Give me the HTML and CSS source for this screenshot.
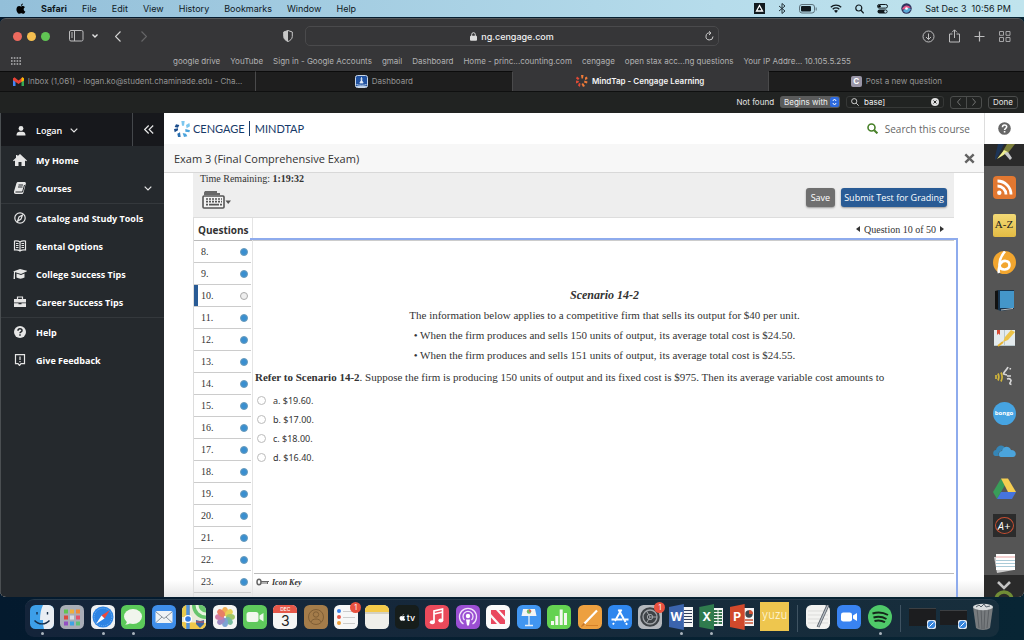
FILE: index.html
```html
<!DOCTYPE html>
<html lang="en">
<head>
  <meta charset="UTF-8">
  <title>MindTap - Cengage Learning</title>
  <link rel="stylesheet" href="styles.css">
</head>
<body>
  <!-- Menu bar -->
  <header class="menubar">
    <nav class="menus">
      <svg class="apple" viewBox="0 0 20 24"><path d="M14 1c0 3-2 5-4 5 0-3 2-5 4-5zM10 7.500c1 0 2-1 4-1 2 0 3.500 1 4.500 2.500-4 2-3 8 1 9.500-1 3-3 5-4.500 5-2 0-2.500-1-4.500-1s-3 1-4.500 1C3 23.500 0 18 0 14c0-5 3-7.500 6-7.500 1.500 0 3 1 4 1z"/></svg>
      <b>Safari</b><span>File</span><span>Edit</span><span>View</span><span>History</span><span>Bookmarks</span><span>Window</span><span>Help</span>
    </nav>
    <div class="status">
      <svg width="11" height="11" viewBox="0 0 11 11"><rect width="11" height="11" fill="#10191e"/><path d="M5.500 2.500L8.500 8h-6z" fill="none" stroke="#fff" stroke-width="1.300"/></svg>
      <svg width="8" height="11" viewBox="0 0 8 11"><path d="M1 3l6 5-3 2.500v-10L7 3 1 8" fill="none" stroke="#26343b"/></svg>
      <svg width="18" height="10" viewBox="0 0 18 10"><rect x=".5" y=".5" width="15" height="8.500" rx="2.500" fill="none" stroke="#5c727c"/><rect x="2" y="2" width="10" height="5.500" rx="1" fill="#10191e"/><path d="M17.200 3.500v3" stroke="#5c727c"/></svg>
      <svg width="12" height="9" viewBox="0 0 12 9"><path d="M.8 3.300a7.500 7.500 0 0 1 10.400 0M2.700 5.300a4.800 4.800 0 0 1 6.600 0" fill="none" stroke="#10191e" stroke-width="1.300"/><path d="M4 6.800a3 3 0 0 1 4 0L6 9z" fill="#10191e"/></svg>
      <svg width="9" height="10" viewBox="0 0 9 10"><circle cx="3.800" cy="4" r="3" fill="none" stroke="#10191e" stroke-width="1.200"/><path d="M6 6.300l2.700 3" stroke="#10191e" stroke-width="1.300"/></svg>
      <svg width="11" height="10" viewBox="0 0 11 10"><rect x=".5" y=".5" width="10" height="3.600" rx="1.800" fill="none" stroke="#10191e"/><circle cx="2.500" cy="2.300" r="1.300"/><rect x=".5" y="5.500" width="10" height="4" rx="2" fill="#10191e"/><circle cx="8.500" cy="7.500" r="1.200" fill="#bce0ec"/></svg>
      <svg width="11" height="11" viewBox="0 0 11 11"><circle cx="5.500" cy="5.500" r="5.200" fill="#31345f"/><path d="M1 6c2-4 6-5 9-1-3-1-6 3-9 1z" fill="#e0558a"/><path d="M2 8c2-3 5-4 8-2-2 4-5 5-8 2z" fill="#58a9d8"/><circle cx="5.500" cy="5.500" r="1.300" fill="#fff"/></svg>
      <span>Sat Dec 3&nbsp; 10:56 PM</span>
    </div>
  </header>

  <div class="window">
    <!-- Safari toolbar -->
    <div class="toolbar">
      <div class="tools-left">
        <span class="light red"></span><span class="light yellow"></span><span class="light green"></span>
        <svg class="side-toggle" width="15" height="12" viewBox="0 0 15 12" fill="none" stroke="#bdbdbe"><rect x=".5" y=".5" width="13.500" height="10.500" rx="1.500"/><path d="M5.500.5v10.500M2 3h2M2 5h2M2 7h2"/></svg>
        <svg class="side-menu" width="6" height="4" viewBox="0 0 6 4"><path d="M.5.5L3 3 5.500.5" fill="none" stroke="#e4e4e4" stroke-width="1.400"/></svg>
        <svg class="back" width="6" height="11" viewBox="0 0 6 11"><path d="M5.500.5l-5 5 5 5" fill="none" stroke="#d2d2d2" stroke-width="1.200"/></svg>
        <svg class="forward" width="6" height="11" viewBox="0 0 6 11"><path d="M.5.5l5 5-5 5" fill="none" stroke="#656567" stroke-width="1.200"/></svg>
        <svg class="shield" width="10" height="12" viewBox="0 0 10 12"><path d="M5 .5l4.300 1.500v4.500C9.300 9 7 10.700 5 11.500 3 10.700.7 9 .7 6.500V2z" fill="none" stroke="#c8c8c8"/><path d="M5 .5v11C3 10.700.7 9 .7 6.500V2z" fill="#c8c8c8"/></svg>
      </div>
      <div class="address">
        <svg width="7" height="9" viewBox="0 0 7 9"><rect y="3.700" width="7" height="5" rx="1" fill="#dcdcdc"/><path d="M1.700 4V2.500a1.800 1.800 0 0 1 3.600 0V4" fill="none" stroke="#dcdcdc"/></svg>
        <span>ng.cengage.com</span>
        <svg class="reload" width="9" height="10" viewBox="0 0 9 10"><path d="M5 2a3.500 3.500 0 1 0 3 3.500M4 .3L6 2.100 4 4" fill="none" stroke="#cfcfcf"/></svg>
      </div>
      <div class="tools-right">
        <svg width="13" height="13" viewBox="0 0 13 13" fill="none" stroke="#bdbdbe"><circle cx="6.500" cy="6.500" r="5.500"/><path d="M6.500 3.500v6M4 7l2.500 2.500L9 7"/></svg>
        <svg width="11" height="14" viewBox="0 0 11 14" fill="none" stroke="#bdbdbe"><path d="M3.500 5h-3v8h10V5h-3M5.500 9V1M3 3.300L5.500.8 8 3.300"/></svg>
        <svg width="11" height="11" viewBox="0 0 11 11"><path d="M5.500.5v10M.5 5.500h10" stroke="#bdbdbe" stroke-width="1.200"/></svg>
        <svg width="12" height="11" viewBox="0 0 12 11" fill="none" stroke="#a4a4a6"><path d="M.5.5h4v3.800h-4zM7 .5h4v3.800H7zM.5 6.500h4v4h-4zM7 6.500h4v4H7z"/></svg>
      </div>
    </div>

    <nav class="bookmarks">
      <svg class="grid-dots" width="10" height="8" viewBox="0 0 10 8"><path d="M0 1h10M0 4h10M0 7h10" stroke="#b4b4b5" stroke-width="1.600" stroke-dasharray="1.600 1.200"/></svg>
      <a href="#">google drive</a><a href="#">YouTube</a><a href="#">Sign in - Google Accounts</a><a href="#">gmail</a><a href="#">Dashboard</a><a href="#">Home - princ...counting.com</a><a href="#">cengage</a><a href="#">open stax acc...ng questions</a><a href="#">Your IP Addre... 10.105.5.255</a>
    </nav>

    <div class="tabs">
      <a class="tab" href="#">
        <svg width="11" height="9" viewBox="0 0 11 9"><path d="M0 1v8h2.500V4z" fill="#4285f4"/><path d="M11 1v8H8.500V4z" fill="#34a853"/><path d="M0 1.500L1.500.3l4 3.200 4-3.200L11 1.500v1.800L5.500 7 0 3.300z" fill="#e94235"/><path d="M8.500 1.100l1.200-.8L11 1.500v2L8.500 5z" fill="#fbbc04"/></svg>
        Inbox (1,061) - logan.ko@student.chaminade.edu - Cha...
      </a>
      <a class="tab" href="#">
        <svg width="13" height="13" viewBox="0 0 13 13"><rect x=".5" y=".5" width="12" height="12" rx="2" fill="#2152a0" stroke="#c8d6e8"/><path d="M6.500 2v6M5.300 4h2.400M4.800 8h3.400L6.500 5z" stroke="#e2ebf6" stroke-width=".8" fill="#e2ebf6"/><path d="M1.500 9.500c2 1 8 1 10 0M1 11.500h11" stroke="#bcd0e8" fill="none"/></svg>
        Dashboard
      </a>
      <a class="tab active" href="#">
        <svg width="12" height="12" viewBox="0 0 24 24"><g fill="#ee7a38"><path d="M10 0h5l-1 7h-3z"/><path d="M18 5l4-2 1 5-5 2z"/><path d="M17 11l6 2-1 4-6-2z"/><path d="M14 16l4 6-4 2-3-6z"/></g><g fill="#e24a36"><path d="M9 17l-1 7-4-3 2-5z"/><path d="M0 11l6 1-1 3-5 2z"/><path d="M2 3l5 4-3 3-4-3z"/></g></svg>
        MindTap - Cengage Learning
      </a>
      <a class="tab" href="#"><span class="letter">C</span>Post a new question</a>
    </div>

    <form class="findbar">
      <label for="find">Not found</label>
      <span class="match">
        <select aria-label="Match"><option>Begins with</option></select>
        <svg width="9" height="10" viewBox="0 0 9 10"><rect width="9" height="10" rx="2" fill="#2e6be0"/><path d="M2.800 4l1.700-2 1.700 2M2.800 6l1.700 2 1.700-2" fill="none" stroke="#fff"/></svg>
      </span>
      <span class="find-field">
        <svg width="8" height="8" viewBox="0 0 8 8" fill="none" stroke="#ccc"><circle cx="3.200" cy="3.200" r="2.600"/><path d="M5.200 5.200L7.700 7.700"/></svg>
        <input id="find" type="text" value="base]">
        <svg width="8" height="8" viewBox="0 0 8 8"><circle cx="4" cy="4" r="4" fill="#dedede"/><path d="M2.500 2.500l3 3m0-3l-3 3" stroke="#2a2a2a"/></svg>
      </span>
      <span class="steps">
        <button type="button" aria-label="Previous"><svg width="4" height="8" viewBox="0 0 4 8"><path d="M3.500.5L.5 4l3 3.500" fill="none" stroke="#737474"/></svg></button>
        <button type="button" aria-label="Next"><svg width="4" height="8" viewBox="0 0 4 8"><path d="M.5.5l3 3.500-3 3.500" fill="none" stroke="#737474"/></svg></button>
      </span>
      <button class="done" type="button">Done</button>
    </form>

    <div class="page">
      <!-- Cengage side menu -->
      <aside class="sidebar">
        <div class="account">
          <button class="user" type="button">
            <svg width="10" height="10" viewBox="0 0 10 10"><circle cx="5" cy="2.500" r="2.400"/><path d="M.5 9.500C.5 6 2.500 5.800 5 5.800s4.500.2 4.500 3.700z"/></svg>
            Logan
            <svg width="8" height="5" viewBox="0 0 8 5"><path d="M.7.7L4 4 7.300.7" class="line"/></svg>
          </button>
          <button class="collapse" type="button" aria-label="Collapse menu"><svg width="10" height="9" viewBox="0 0 10 9"><path d="M4.700.5l-4 4 4 4M9.200.5l-4 4 4 4" class="line"/></svg></button>
        </div>
        <nav>
          <ul>
            <li><a href="#"><svg viewBox="0 0 14 12"><path d="M7 0l7 6.500-.8.800L12 6.500V12H8.500V8h-3v4H2V6.500l-1.200.8L0 6.500 3 3.700V1h1.500v1.300z"/></svg>My Home</a></li>
            <li><a href="#"><svg viewBox="0 0 14 12"><path d="M4.500 0H12l1 1-2.500 9.500-.8 1.500H3C1 12 .8 10.500 1 9.500L3.500 1z"/><path d="M5.500 3h4.500M5 5h4.500M2.500 10h7l2-7" stroke="#25292d" fill="none"/></svg>Courses<svg class="open" viewBox="0 0 8 5"><path d="M.7.7L4 4 7.300.7" class="line"/></svg></a></li>
          </ul>
          <ul>
            <li><a href="#"><svg viewBox="0 0 14 12"><circle cx="7" cy="6" r="5.200" class="line"/><path d="M9.500 3L8 7 4.500 9.200 6 5z" class="line"/></svg>Catalog and Study Tools</a></li>
            <li><a href="#"><svg viewBox="0 0 14 12"><path d="M7 2C5.500.8 3.500.8 1.500 1v9c2-.2 4-.2 5.500 1 1.500-1.200 3.500-1.200 5.500-1V1c-2-.2-4-.2-5.500 1zv9M3 3.500h2.500M3 5.500h2.500M3 7.500h2.500M8.500 3.500H11M8.500 5.500H11M8.500 7.500H11" class="line"/></svg>Rental Options</a></li>
            <li><a href="#"><svg viewBox="0 0 14 12"><path d="M0 3.500L7 1l7.500 2L8 6zM3.500 5.500L8 7l3.500-1.500v4C9 11 6 11 3.500 9.500zM1 4h1v7H.5z"/></svg>College Success Tips</a></li>
            <li><a href="#"><svg viewBox="0 0 14 12"><path d="M4.500 3V1h5v2" class="line"/><path d="M1 3h12v3.500H1zM1 7.200h4.500v1h3v-1H13V11H1z"/></svg>Career Success Tips</a></li>
          </ul>
          <ul>
            <li><a href="#"><svg viewBox="0 0 14 12"><circle cx="7" cy="6" r="6"/><path d="M5 4.700c0-2.600 4-2.600 4-.3C9 6 7 5.800 7 7.300M7 8.300v1.500" stroke="#25292d" stroke-width="1.500" fill="none"/></svg>Help</a></li>
            <li><a href="#"><svg viewBox="0 0 14 12"><path d="M2.500.7h9v9H8L6.500 11.500 5 9.700H2.500zM7 2.500v3.500M7 7v1.300" class="line"/></svg>Give Feedback</a></li>
          </ul>
        </nav>
      </aside>

      <main class="course">
        <header class="brand">
          <svg width="16" height="16" viewBox="0 0 24 24"><g fill="#7cc7ee"><path d="M11 0h5l-1 7h-3z"/><path d="M18 6l5-3 1 5-5 3z"/></g><path d="M17 12l7 2-1 3-6-1zM13 18l5 1 2 4-5 1z" fill="#4ba3dc"/><path d="M9 17l1 7H6l-1-5z" fill="#2a6fb0"/><path d="M0 12l6-1v3l-5 3zM3 5l5 1-2 4-5-1z" fill="#1b4d8c"/></svg>
          <span class="cengage">CENGAGE</span><span class="mindtap">MINDTAP</span>
          <a class="search" href="#"><svg width="11" height="11" viewBox="0 0 11 11" fill="none" stroke="#478028"><circle cx="4.500" cy="4.500" r="3.500" stroke-width="1.600"/><path d="M7.200 7.200l3.200 3.200" stroke-width="2"/></svg>Search this course</a>
        </header>
        <div class="exam-bar">
          <h1>Exam 3 (Final Comprehensive Exam)</h1>
          <button type="button" aria-label="Close"><svg width="11" height="11" viewBox="0 0 11 11"><path d="M1.300 1.300l8.400 8.400m0-8.400L1.300 9.700" stroke="#636363" stroke-width="2.400"/></svg></button>
        </div>
        <div class="exam">
          <div class="exam-head">
            <div>
              <p class="timer">Time Remaining: <b>1:19:32</b></p>
              <button class="keyboard" type="button" aria-label="Keyboard">
                <svg width="31" height="20" viewBox="0 0 31 20"><path d="M5 1h12v2h3v2H4V2.500z" fill="#686868"/><rect x="3" y="6" width="21" height="12" rx="1" fill="#f5f5f5" stroke="#555" stroke-width="1.600"/><path d="M6 9h16M6 11.700h16" stroke="#555" stroke-width="1.700" stroke-dasharray="2 1"/><path d="M6 14.700h2M9 14.700h10M20 14.700h2" stroke="#555" stroke-width="1.700"/><path d="M25.500 10.500H31L28.200 14z" fill="#555"/></svg>
              </button>
            </div>
            <div class="actions">
              <button class="save" type="button">Save</button>
              <button class="submit" type="button">Submit Test for Grading</button>
            </div>
          </div>
          <div class="exam-body">
            <nav class="questions">
              <h2>Questions</h2>
              <ul>
                <li><a href="#">8.<i></i></a></li>
                <li><a href="#">9.<i></i></a></li>
                <li class="current"><a href="#">10.<i></i></a></li>
                <li><a href="#">11.<i></i></a></li>
                <li><a href="#">12.<i></i></a></li>
                <li><a href="#">13.<i></i></a></li>
                <li><a href="#">14.<i></i></a></li>
                <li><a href="#">15.<i></i></a></li>
                <li><a href="#">16.<i></i></a></li>
                <li><a href="#">17.<i></i></a></li>
                <li><a href="#">18.<i></i></a></li>
                <li><a href="#">19.<i></i></a></li>
                <li><a href="#">20.<i></i></a></li>
                <li><a href="#">21.<i></i></a></li>
                <li><a href="#">22.<i></i></a></li>
                <li><a href="#">23.<i></i></a></li>
              </ul>
            </nav>
            <div class="question-col">
              <div class="pager"><a class="prev" href="#" aria-label="Previous question"></a>Question 10 of 50<a class="next" href="#" aria-label="Next question"></a></div>
              <form class="question">
                <div class="scenario">
                  <h3>Scenario 14-2</h3>
                  <p>The information below applies to a competitive firm that sells its output for $40 per unit.</p>
                  <p>• When the firm produces and sells 150 units of output, its average total cost is $24.50.</p>
                  <p>• When the firm produces and sells 151 units of output, its average total cost is $24.55.</p>
                </div>
                <p class="prompt"><b>Refer to Scenario 14-2</b>. Suppose the firm is producing 150 units of output and its fixed cost is $975. Then its average variable cost amounts to</p>
                <label><input type="radio" name="answer">a. $19.60.</label>
                <label><input type="radio" name="answer">b. $17.00.</label>
                <label><input type="radio" name="answer">c. $18.00.</label>
                <label><input type="radio" name="answer">d. $16.40.</label>
              </form>
              <a class="icon-key" href="#"><svg width="14" height="8" viewBox="0 0 14 8" fill="none" stroke="#666"><ellipse cx="3" cy="4" rx="2" ry="2.800" stroke-width="1.500"/><path d="M5 3.500h8M5 5h6M11.500 4v2" /></svg>Icon Key</a>
            </div>
          </div>
        </div>
      </main>

      <!-- App dock on the right of the course -->
      <aside class="rail">
        <a class="help" href="#" aria-label="Help"><svg width="13" height="13" viewBox="0 0 13 13"><circle cx="6.500" cy="6.500" r="6.300" fill="#666"/><path d="M4.500 5.200c0-3 4.200-2.800 4.200-.4C8.700 6.300 6.600 6.300 6.600 8M6.600 9v1.500" fill="none" stroke="#fff" stroke-width="1.600"/></svg></a>
        <div class="rail-top"><svg width="22" height="17" viewBox="0 0 22 17"><path d="M5 0h6L4 14l-2 2 0-3z" fill="#1d3557"/><path d="M14 0h8l-7 9-5-2z" fill="#7d803c"/><path d="M4 15l7-9 4 2-6 4z" fill="#f0f090"/><path d="M11 9l4-1 4 6-2 2z" fill="#c7c8ca"/></svg></div>
        <div class="rail-apps">
          <svg viewBox="0 0 23 23"><rect width="23" height="23" rx="4" fill="#e27831"/><circle cx="6.300" cy="16.700" r="2.200" fill="#fff"/><path d="M4.500 10a8.500 8.500 0 0 1 8.500 8.500M4.500 5A13.500 13.500 0 0 1 18 18.500" fill="none" stroke="#fff" stroke-width="2.800"/></svg>
          <span class="az">A-Z</span>
          <svg viewBox="0 0 23 23"><circle cx="11.500" cy="11.500" r="11.500" fill="#f2a62f"/><path d="M12 .5C8 5 6 10 6.500 15c1 5 10 4.500 10-1 0-5-7-5.500-9-1M7 13c-1 5-2 6-1 9" fill="none" stroke="#fff" stroke-width="2.600"/></svg>
          <svg viewBox="0 0 23 23"><path d="M2 2l4-1v20l-4-1z" fill="#111"/><path d="M5 1h16v19l-13 2-3-1z" fill="#17344e"/><path d="M7 2h14v17H7z" fill="#4496c9"/><path d="M8 21l12-1.500" stroke="#bbb"/></svg>
          <svg viewBox="0 0 23 23"><path d="M1 4h21v16H1z" fill="#e4ebed"/><path d="M11.500 4v16M1 19.500h21" stroke="#b9c8cc"/><path d="M4 4h3v5L5.500 7.500 4 9z" fill="#d94b34"/><path d="M18 4l4 2-7 8-5 2 2-5z" fill="#edc347"/><path d="M5 20l5-4" stroke="#e8b432" stroke-width="2"/></svg>
          <svg viewBox="0 0 23 23" fill="none"><path d="M15 3c-1 3-4 4-4.500 7l3.500 1M14 12h4M14 15c3-1 5 1 3.500 3-1 1-1 2 1 2.500M16.500 4.500l1.500.5" stroke="#d6d6d6" stroke-width="1.700"/><path d="M3 11v4M5 9.500c1 2 1 5 0 7M8 8.500c1.500 3 1.500 6 0 9" stroke="#d0b53a" stroke-width="1.700"/></svg>
          <span class="bongo">bongo</span>
          <svg viewBox="0 0 23 23"><path d="M2 17c-3-1-2-6 1-6 1-5 7-6 9-2l-4 3c-3 1-3 4-2 5z" fill="#3585b6"/><path d="M8 18c-4-1-2-6 1-6 1-5 7-6 9-1 6 0 6 7 2 7z" fill="#4ba4dc"/></svg>
          <svg viewBox="0 0 23 23"><path d="M8 1.500L0 15l4 7 8-14z" fill="#399d59"/><path d="M8 1.500h7L23 15h-8z" fill="#f6ce51"/><path d="M8 15h15l-4 7H4z" fill="#4674dd"/></svg>
          <span class="grade">A+</span>
          <svg viewBox="0 0 23 23"><path d="M1 5l18-1 2 14-17 3z" fill="#ccc"/><path d="M3 2h19v16H3z" fill="#fff"/><path d="M3 5h19" stroke="#e9a3a3"/><path d="M3 8.500h19M3 11.500h19M3 14.500h19" stroke="#aacbd8"/></svg>
        </div>
        <button class="rail-more" type="button" aria-label="More"><svg width="22" height="22" viewBox="0 0 22 22"><path d="M3 25a8 8 0 0 1 16 0" fill="none" stroke="#718d36" stroke-width="3.500"/><path d="M5 7l6 6 6-6" fill="none" stroke="#c4c4c4" stroke-width="2.600"/></svg></button>
      </aside>
    </div>
  </div>

  <!-- Dock -->
  <footer class="dock">
    <div class="apps main-apps">
      <span class="app running"><svg viewBox="0 0 24 24"><rect width="24" height="24" rx="5.500" fill="#3d9fe9"/><path d="M13 0h5.500A5.500 5.500 0 0 1 24 5.500v13a5.500 5.500 0 0 1-5.500 5.500H14c-1-4-1-7-1-9h-3c0-6 1-11 3-15z" fill="#e9edf3"/><path d="M7 7v2.500M17.500 7v2.500M4.500 15.500c4 4.500 11 4.500 15 0" fill="none" stroke="#152e4b" stroke-width="1.400"/></svg></span>
      <span class="app"><svg viewBox="0 0 24 24"><rect width="24" height="24" rx="5.500" fill="#a9adb7"/><g stroke-width="4"><path d="M4 6.500h4" stroke="#61c454"/><path d="M10 6.500h4" stroke="#efaf3c"/><path d="M16 6.500h4" stroke="#f08b35"/><path d="M4 12.500h4" stroke="#dc4a3f"/><path d="M10 12.500h4" stroke="#d9dce2"/><path d="M16 12.500h4" stroke="#e5536e"/><path d="M4 18.500h4" stroke="#9350c2"/><path d="M10 18.500h4" stroke="#3fa3e4"/><path d="M16 18.500h4" stroke="#5ec178"/></g></svg></span>
      <span class="app running"><svg viewBox="0 0 24 24"><rect width="24" height="24" rx="5.500" fill="#eef0f2"/><circle cx="12" cy="12" r="10.500" fill="#2d83e4"/><circle cx="12" cy="12" r="8.800" fill="none" stroke="#9bd0fb" stroke-dasharray=".6 1.500"/><path d="M19 5l-5.500 8.500-3-3z" fill="#ee493d"/><path d="M5 19l5.500-8.500 3 3z" fill="#fff"/></svg></span>
      <span class="app running"><svg viewBox="0 0 24 24"><rect width="24" height="24" rx="5.500" fill="#5bc95a"/><ellipse cx="12" cy="11.500" rx="9" ry="7.500" fill="#f0f5ed"/><path d="M6 16c0 2-1 3-2 3.500 2 0 4-.5 5-1.500z" fill="#f0f5ed"/></svg></span>
      <span class="app"><svg viewBox="0 0 24 24"><rect width="24" height="24" rx="5.500" fill="#3f8eea"/><rect x="3.500" y="6" width="17" height="12" rx="1.500" fill="#eef2f5"/><path d="M4 7l8 6.500L20 7M4 17.500l6-5.500M20 17.500L14 12" fill="none" stroke="#89939d"/></svg></span>
      <span class="app"><svg viewBox="0 0 24 24"><rect width="24" height="24" rx="5.500" fill="#e9ead9"/><path d="M0 12V5.500A5.500 5.500 0 0 1 5 0h3v12z" fill="#e9ca4d"/><path d="M10 0h8.500A5.500 5.500 0 0 1 24 5.500V14C16 14 10 8 10 0z" fill="#67c56c"/><path d="M15 0c0 5 4 9 9 9" stroke="#e8f3df" stroke-width="3" fill="none"/><path d="M0 17l24 1v.5a5.500 5.500 0 0 1-5.500 5.500h-13A5.500 5.500 0 0 1 0 18.500z" fill="#efc84a"/><path d="M6 0v24" stroke="#4e91df" stroke-width="3.500"/><circle cx="6" cy="14" r="4" fill="#fff"/><circle cx="6" cy="14" r="2.800" fill="#337be0"/><path d="M14 15l4 1 4-1v4l-4 4-4-4z" fill="#3867a7"/><path d="M14 17h8" stroke="#e05044"/></svg></span>
      <span class="app"><svg viewBox="0 0 24 24"><rect width="24" height="24" rx="5.500" fill="#f5f5f5"/><g opacity=".85"><ellipse cx="12" cy="6.500" rx="3" ry="4.500" fill="#f2a23a"/><ellipse cx="12" cy="6.500" rx="3" ry="4.500" transform="rotate(45 12 12)" fill="#e6cc3d"/><ellipse cx="12" cy="6.500" rx="3" ry="4.500" transform="rotate(90 12 12)" fill="#93c052"/><ellipse cx="12" cy="6.500" rx="3" ry="4.500" transform="rotate(135 12 12)" fill="#60b290"/><ellipse cx="12" cy="6.500" rx="3" ry="4.500" transform="rotate(180 12 12)" fill="#6795ce"/><ellipse cx="12" cy="6.500" rx="3" ry="4.500" transform="rotate(225 12 12)" fill="#8d76bb"/><ellipse cx="12" cy="6.500" rx="3" ry="4.500" transform="rotate(270 12 12)" fill="#cb6896"/><ellipse cx="12" cy="6.500" rx="3" ry="4.500" transform="rotate(315 12 12)" fill="#e66a4e"/></g></svg></span>
      <span class="app"><svg viewBox="0 0 24 24"><rect width="24" height="24" rx="5.500" fill="#5fc95c"/><rect x="3.500" y="7" width="12" height="10" rx="2.500" fill="#f1f7ee"/><path d="M16.500 10.500L20.500 8v8.500l-4-2.500z" fill="#f1f7ee"/></svg></span>
      <span class="app calendar"><b>DEC</b>3</span>
      <span class="app"><svg viewBox="0 0 24 24"><rect width="24" height="24" rx="5.500" fill="#a47c4a"/><g fill="none" stroke="#7f5e36"><circle cx="12" cy="12" r="7.500"/><circle cx="12" cy="9.500" r="2.700"/><path d="M7 17c1-4 9-4 10 0"/></g></svg></span>
      <span class="app"><svg viewBox="0 0 24 24"><rect width="24" height="24" rx="5.500" fill="#f7f7f7"/><circle cx="5" cy="6" r="2" fill="#3b81e8"/><circle cx="5" cy="12" r="2" fill="#e95848"/><circle cx="5" cy="18" r="2" fill="#efa03c"/><path d="M9 6.500h12M9 12.500h12M9 18.500h12" stroke="#ccc"/></svg><em class="badge">1</em></span>
      <span class="app"><svg viewBox="0 0 24 24"><rect width="24" height="24" rx="5.500" fill="#efefea"/><path d="M0 7V5.500A5.500 5.500 0 0 1 5.500 0h13A5.500 5.500 0 0 1 24 5.500V7z" fill="#f4ca49"/><path d="M0 8h24" stroke="#b7b29d"/></svg></span>
      <span class="app tv"><svg viewBox="0 0 20 24"><path d="M14 1c0 3-2 5-4 5 0-3 2-5 4-5zM10 7.500c1 0 2-1 4-1 2 0 3.500 1 4.500 2.500-4 2-3 8 1 9.500-1 3-3 5-4.500 5-2 0-2.500-1-4.500-1s-3 1-4.500 1C3 23.500 0 18 0 14c0-5 3-7.500 6-7.500 1.500 0 3 1 4 1z"/></svg>tv</span>
      <span class="app"><svg viewBox="0 0 24 24"><rect width="24" height="24" rx="5.500" fill="#ea4a5b"/><path d="M9 17V6l8.500-2v11.500M9 9l8.500-2" fill="none" stroke="#fff" stroke-width="1.700"/><ellipse cx="7.300" cy="17.300" rx="2.500" ry="2" fill="#fff"/><ellipse cx="15.800" cy="15.500" rx="2.500" ry="2" fill="#fff"/></svg></span>
      <span class="app"><svg viewBox="0 0 24 24"><rect width="24" height="24" rx="5.500" fill="#9b4fd3"/><g fill="none" stroke="#f2e4fb" stroke-width="1.300"><path d="M7.500 19a8.500 8.500 0 1 1 9 0M8.500 15a5 5 0 1 1 7 0"/></g><circle cx="12" cy="11" r="2.200" fill="#fff"/><path d="M10 14.500h4l-1 6h-2z" fill="#fff"/></svg></span>
      <span class="app"><svg viewBox="0 0 24 24"><rect width="24" height="24" rx="5.500" fill="#fafafa"/><path d="M5 5h5l9 10v4h-5L5 9zM13 5h6v6.500zM5 12.500v6.500h6z" fill="#e9485f"/></svg></span>
      <span class="app"><svg viewBox="0 0 24 24"><rect width="24" height="24" rx="5.500" fill="#4196f1"/><path d="M6 4h12l1.500 7h-15z" fill="#f4f4f4"/><circle cx="12" cy="6.500" r="2.200" fill="#75b860"/><path d="M12 6.500V4.300a2.200 2.200 0 0 1 2 3z" fill="#db5d55"/><path d="M12 11v9M8 20.500h8" stroke="#e5eef8" stroke-width="1.300"/></svg></span>
      <span class="app"><svg viewBox="0 0 24 24"><rect width="24" height="24" rx="5.500" fill="#64d251"/><path d="M5.500 20v-4M9.800 20V11M14.200 20V4.500M18.500 20V8" stroke="#f4f7ef" stroke-width="3"/></svg></span>
      <span class="app"><svg viewBox="0 0 24 24"><rect width="24" height="24" rx="5.500" fill="#eda040"/><path d="M5 20L19 5.500" stroke="#fff" stroke-width="2.200"/><path d="M3.500 21.500l2-3.500 1.500 1.500zM8 20.500h12" stroke="#d58129" fill="#b9732d"/></svg></span>
      <span class="app"><svg viewBox="0 0 24 24"><rect width="24" height="24" rx="5.500" fill="#2f87ee"/><path d="M13.500 4.500L7 16M10.500 4.500L17.500 17M3.500 14.500h11M17 14.500h3.500M6 18l-1.200 1.500M18 18l1 1.800" stroke="#fff" stroke-width="1.900"/></svg></span>
      <span class="app"><svg viewBox="0 0 24 24"><rect width="24" height="24" rx="5.500" fill="#b4b8bd"/><circle cx="12" cy="12" r="9.800" fill="#3e4347"/><circle cx="12" cy="12" r="7" fill="none" stroke="#a0a4a8" stroke-width="1.300"/><circle cx="12" cy="12" r="2.700" fill="none" stroke="#a0a4a8"/><path d="M12 12h7M12 12L8.500 6M12 12l-3.500 6" stroke="#a0a4a8"/></svg><em class="badge">1</em></span>
      <span class="app office word running"><svg viewBox="0 0 24 24"><path d="M13 2h11v20H13z" fill="#f5f5f5"/><path d="M15 5.500h8M15 8.500h8M15 11.500h8M15 14.500h8M15 17.500h8" stroke="#33405b"/></svg><b>W</b></span>
      <span class="app office excel running"><svg viewBox="0 0 24 24"><path d="M13 3h11v18H13z" fill="#f5f5f5"/><path d="M15 6h8M15 9h8M15 12h8M15 15h8M15 18h8" stroke="#36764f" stroke-width="1.800" stroke-dasharray="3.500 1"/></svg><b>X</b></span>
      <span class="app office powerpoint"><svg viewBox="0 0 24 24"><path d="M13 3h11v18H13z" fill="#f5f5f5"/><circle cx="19" cy="9" r="3.700" fill="#40464b"/><path d="M19 9V5a4 4 0 0 1 4 4z" fill="#d75336"/><path d="M15 15h8M15 18h8" stroke="#c85335" stroke-width="1.300"/></svg><b>P</b></span>
      <span class="app yuzu">yuzu</span>
    </div>
    <hr>
    <div class="apps">
      <span class="app"><svg viewBox="0 0 24 24"><rect width="24" height="24" rx="5.500" fill="#f3f3f1"/><path d="M2 6h20M2 10h20M2 14h20M2 18h20" stroke="#d2d2d0" stroke-width=".7"/><path d="M12 22L22 0" stroke="#59616a" stroke-width="3"/><path d="M12.300 21.500L21.800.5" stroke="#b8bec4" stroke-width="1.300"/></svg></span>
      <span class="app"><svg viewBox="0 0 24 24"><rect width="24" height="24" rx="5.500" fill="#3983f1"/><rect x="4" y="7.500" width="11" height="9" rx="2.300" fill="#fff"/><path d="M16 10.500L20 8v8l-4-2.500z" fill="#fff"/></svg></span>
      <span class="app running"><svg viewBox="0 0 24 24"><circle cx="12" cy="12" r="12" fill="#4fc969"/><path d="M4.500 8.500c5-1.500 11-1 15.500 1.500M5.500 12.500c4.500-1.200 9-.8 13 1.500M6.500 16c4-1 7-.7 10.500 1.200" fill="none" stroke="#15261b" stroke-width="2"/></svg></span>
    </div>
    <hr>
    <div class="apps">
      <span class="app mini"><svg viewBox="0 0 27 24"><path d="M0 3h27v18H0z" fill="#1c1d1f"/><path d="M0 3.500h27" stroke="#3c3f42"/><rect x="18" y="15" width="9" height="9" rx="2" fill="#e9eef4"/><circle cx="22.500" cy="19.500" r="3.800" fill="#3685dc"/><path d="M20.500 21.500l4-4" stroke="#fff"/></svg></span>
      <span class="app mini"><svg viewBox="0 0 27 24"><path d="M0 5h27v15H0z" fill="#1c1d1f"/><path d="M0 5.500h27" stroke="#3c3f42"/><rect x="18" y="15" width="9" height="9" rx="2" fill="#e9eef4"/><circle cx="22.500" cy="19.500" r="3.800" fill="#3685dc"/><path d="M20.500 21.500l4-4" stroke="#fff"/></svg></span>
      <span class="app trash"><svg viewBox="0 0 22 27"><path d="M1 4h20l-3 21c-3 2.500-11 2.500-14 0z" fill="#777b7e"/><path d="M5 5l2 20M9 5l1 21M13 5l-1 21M17 5l-2 20" stroke="#5b5f63"/><ellipse cx="11" cy="4" rx="10" ry="3.300" fill="#d9dcdd"/><path d="M4 4l3-2 2 2 3-3 2 3 4-1" fill="none" stroke="#56606a"/></svg></span>
    </div>
  </footer>
</body>
</html>
```
FILE: styles.css
```css
* { box-sizing: border-box; }
body {
  margin: 0;
  height: 100vh;
  display: flex;
  flex-direction: column;
  overflow: hidden;
  font-family: Inter, sans-serif;
  font-size: 9px;
  background: linear-gradient(90deg, #041a2e, #082534);
}
a { color: inherit; text-decoration: none; }
button { border: 0; padding: 0; background: none; font: inherit; color: inherit; }
h1, h2, h3, p, ul { margin: 0; padding: 0; }
h1 { font-weight: normal; }
li { list-style: none; }
svg { flex: none; display: block; }

/* menu bar */
.menubar {
  flex: none;
  height: 17px;
  display: flex;
  justify-content: space-between;
  align-items: center;
  padding: 0 13px 0 16px;
  color: #10191e;
  background: linear-gradient(90deg, #93bfd9, #b6dceb 70%, #c0e4ed);
}
.menus, .status { display: flex; align-items: center; gap: 15px; }
.apple { width: 10px; height: 11px; }
.status { gap: 13px; }

/* browser window */
.window {
  flex: 1;
  min-height: 0;
  margin-top: 1px;
  display: flex;
  flex-direction: column;
  overflow: hidden;
  border-radius: 6px;
  background: #363638;
  border-top: 1px solid #58595b;
}
.toolbar {
  flex: none;
  height: 34px;
  display: grid;
  grid-template-columns: 1fr minmax(0, 414px) 1fr;
  align-items: center;
  padding: 0 13px;
}
.tools-left, .tools-right { display: flex; align-items: center; }
.light { width: 9px; height: 9px; margin-right: 5px; border-radius: 50%; }
.red { background: #ed6a5e; }
.yellow { background: #f5bf4f; }
.green { background: #61c454; }
.side-toggle { margin-left: 14px; }
.side-menu { margin-left: 8px; }
.back { margin-left: 17px; }
.forward { margin-left: 20px; }
.shield { margin-left: auto; margin-right: 12px; }
.address {
  height: 20px;
  display: flex;
  align-items: center;
  justify-content: center;
  gap: 4px;
  position: relative;
  border: 1px solid #4a4a4c;
  border-radius: 5px;
  color: #f0f0f0;
  font-weight: 500;
}
.reload { position: absolute; right: 4px; }
.tools-right { justify-content: flex-end; gap: 14px; }
.bookmarks {
  flex: none;
  height: 18px;
  display: flex;
  align-items: center;
  justify-content: center;
  gap: 10px;
  position: relative;
  padding-bottom: 3px;
  color: #b2b2b3;
  font-size: 8px;
  white-space: nowrap;
}
.grid-dots { position: absolute; left: 11px; top: 4px; }
.tabs { flex: none; height: 20px; display: flex; }
.tab {
  flex: 1;
  display: flex;
  align-items: center;
  justify-content: center;
  gap: 4px;
  padding-bottom: 1px;
  border-top: 1px solid #0c0c0c;
  border-right: 1px solid #4a4a4b;
  background: #1e1e1e;
  color: #949494;
  font-size: 8px;
  white-space: nowrap;
}
.tab.active { border-top-color: #363638; background: #363638; color: #f4f4f4; font-weight: 600; }
.tab:last-child { border-right: 0; }
.letter {
  width: 11px;
  height: 11px;
  border-radius: 2px;
  background: #9b97a8;
  color: #fff;
  font-weight: 700;
  line-height: 11px;
  text-align: center;
}
.findbar {
  flex: none;
  height: 21px;
  display: flex;
  align-items: center;
  justify-content: flex-end;
  gap: 6px;
  padding-right: 6px;
  border-top: 1px solid #0f1010;
  background: #212322;
  color: #e6e6e6;
  font-size: 8px;
}
.match { position: relative; }
.match select {
  display: block;
  width: 60px;
  height: 12px;
  appearance: none;
  border: 0;
  border-radius: 3px;
  padding: 0 4px;
  background: #5a5b5b;
  color: #f2f2f2;
  font: 8px Inter, sans-serif;
}
.match svg { position: absolute; right: 1px; top: 1px; }
.find-field {
  width: 98px;
  height: 12px;
  display: flex;
  align-items: center;
  gap: 5px;
  padding: 0 4px;
  border: 1px solid #363837;
  border-radius: 3px;
}
.find-field input {
  flex: 1;
  min-width: 0;
  border: 0;
  padding: 0;
  background: none;
  color: #f2f2f2;
  font: 8px Inter, sans-serif;
}
.steps { display: flex; border: 1px solid #4b4d4c; border-radius: 3px; }
.steps button { width: 15px; height: 11px; display: grid; place-items: center; }
.steps button + button { border-left: 1px solid #4b4d4c; }
.done { height: 13px; padding: 0 4px; border: 1px solid #4b4d4c; border-radius: 3px; }

/* page */
.page {
  flex: 1;
  min-height: 0;
  display: flex;
  border-top: 1px solid #212322;
  background: #fff;
  font-family: "Open Sans", sans-serif;
}
.sidebar {
  flex: none;
  width: 164px;
  border-left: 1px solid #4b4f52;
  background: #25292d;
  color: #fff;
  font-weight: 600;
}
.sidebar svg { fill: #e6e6e6; }
.sidebar .line { fill: none; stroke: #e6e6e6; stroke-width: 1.2; }
.account { height: 33px; display: flex; background: #17181c; }
.user {
  flex: 1;
  display: flex;
  align-items: center;
  gap: 8px;
  padding-left: 15px;
  padding-top: 2px;
}
.user svg:first-child { margin-right: 2px; }
.collapse { width: 32px; display: grid; place-items: center; border-left: 1px solid #44474b; }
.sidebar nav { font-weight: 700; }
.sidebar ul { padding-bottom: 1px; border-bottom: 1px solid #34383c; }
.sidebar ul:last-child { border: 0; }
.sidebar a { height: 28px; display: flex; align-items: center; gap: 9px; padding: 0 12px; }
.sidebar a svg { width: 14px; height: 12px; }
.sidebar a .open { width: 8px; height: 5px; margin-left: auto; }

.course { flex: 1; min-width: 0; display: flex; flex-direction: column; color: #333; }
.brand { flex: none; height: 31px; display: flex; align-items: center; padding: 0 14px 0 10px; color: #173a68; font-size: 11px; }
.brand span { font-family: Lato, sans-serif; line-height: 15px; }
.cengage { padding: 0 4px 0 3px; border-right: 1px solid #173a68; }
.mindtap { padding-left: 5px; }
.search { margin-left: auto; display: flex; align-items: center; gap: 7px; color: #666; font-size: 10px; }
.exam-bar {
  flex: none;
  height: 29px;
  display: flex;
  align-items: center;
  justify-content: space-between;
  padding: 0 9px 0 10px;
  border-bottom: 1px solid #d8d8d8;
  background: #f7f7f7;
}
.exam-bar h1 { font-size: 11px; }
.exam { flex: 1; min-height: 0; display: flex; flex-direction: column; padding: 0 30px 0 29px; background: linear-gradient(#fff 96%, #e6e6e6); }
.exam-head {
  flex: none;
  height: 45px;
  display: flex;
  justify-content: space-between;
  padding: 0 7px;
  border-bottom: 1px solid #ddd;
  background: #eee;
}
.timer { font: 10px/12px "Liberation Serif", serif; }
.keyboard { display: block; margin-top: 5px; }
.actions { display: flex; gap: 6px; align-items: center; padding-top: 5px; color: #fff; }
.actions button { height: 19px; padding: 0 5px; border-radius: 3px; box-shadow: 0 1px 2px #999; }
.actions .save { background: #6f6f6f; }
.actions .submit { padding: 0 3px; background: #295b95; }
.exam-body { flex: 1; min-height: 0; display: flex; }
.questions { flex: none; width: 60px; overflow: hidden; border-left: 1px solid #ddd; border-right: 1px solid #e4e4e4; }
.questions h2 { height: 23px; padding-left: 4px; border-bottom: 1px solid #bbb; font-size: 10px; font-weight: 700; line-height: 24px; }
.questions li { margin-right: 1px; border-bottom: 1px solid #ccc; }
.questions a {
  height: 21px;
  display: flex;
  align-items: center;
  justify-content: space-between;
  padding: 0 3px 0 7px;
  font: 10px "Liberation Serif", serif;
}
.questions i { width: 8px; height: 8px; border: 1px solid #6c9cbb; border-radius: 50%; background: #3a8fd0; }
.questions .current a { padding-left: 3px; border-left: 4px solid #295b95; }
.questions .current i { border-color: #aaa; background: #eee; }

.question-col { flex: 1; min-width: 0; display: flex; flex-direction: column; position: relative; }
/* focus ring of the question frame */
.question-col::before {
  content: "";
  position: absolute;
  inset: 20px -4px 0 -3px;
  border: solid #8eabed;
  border-width: 2px 2px 0 0;
  pointer-events: none;
}
.pager {
  flex: none;
  height: 23px;
  display: flex;
  align-items: center;
  justify-content: flex-end;
  gap: 4px;
  padding-right: 10px;
  border-bottom: 1px solid #ccc;
  font: 10px "Liberation Serif", serif;
}
.prev, .next { border: 3px solid transparent; }
.prev { border-left-width: 0; border-right: 4px solid #333; }
.next { border-right-width: 0; border-left: 4px solid #333; }
.question { flex: 1; padding: 44px 0 0 2px; font: 11px/20px "Liberation Serif", serif; }
.scenario { text-align: center; }
.scenario h3 { font-size: 12px; font-style: italic; }
.prompt { margin: 2px 0 4px; white-space: nowrap; }
.question label { display: flex; align-items: center; height: 19px; font: 9px "Noto Sans", sans-serif; }
.question input { appearance: none; width: 9px; height: 9px; margin: 0 7px 0 2px; border: 1px solid #bbb; border-radius: 50%; }
.icon-key {
  flex: none;
  height: 24px;
  display: flex;
  gap: 2px;
  margin-left: 1px;
  padding: 4px 0 0 2px;
  border-top: 1px solid #bbb;
  font: italic bold 8px/9px "Liberation Serif", serif;
}

/* right rail */
.rail { flex: none; width: 40px; display: flex; flex-direction: column; background: #555; }
.help { flex: none; height: 31px; display: grid; place-items: center; border-left: 1px solid #ddd; background: #fff; }
.rail-top, .rail-more { flex: none; height: 22px; display: grid; place-items: start center; background: #2a2a2a; }
.rail-apps {
  flex: 1;
  min-height: 0;
  display: flex;
  flex-direction: column;
  align-items: center;
  justify-content: space-between;
  padding-top: 10px;
  overflow: hidden;
}
.rail-apps > * { width: 23px; height: 23px; flex: none; line-height: 23px; text-align: center; }
.az { border-radius: 2px; background: linear-gradient(#f3da76, #e3bb44); color: #222; font: 11px/21px "Liberation Serif", serif; }
.bongo { border-radius: 50%; background: #46a4e2; color: #fff; font-size: 6px; font-weight: 700; }
.grade { position: relative; background: #2b2b2b; color: #fff; font-size: 11px; font-style: italic; }
.grade::after { content: ""; position: absolute; inset: 3px 2px; border: 1px solid #c64f32; border-radius: 50%; }

/* dock */
.dock {
  flex: none;
  height: 38px;
  display: flex;
  gap: 8px;
  margin: 2px 25px 3px;
  padding: 5px 5px 0;
  border: 1px solid #263a4b;
  border-width: 1px 0 0;
  border-radius: 9px;
  background: linear-gradient(90deg, #14243a, #172e3c);
}
.dock hr { flex: none; width: 1px; height: 27px; margin: 0; border: 0; background: #3f5362; }
.apps { flex: 85 1 0; display: flex; justify-content: space-between; }
.main-apps { flex-grow: 757; }
.app { width: 24px; height: 24px; flex: none; position: relative; }
.app svg { width: 100%; height: 100%; }
.mini { width: 27px; }
.trash { width: 22px; height: 27px; margin-top: -2px; }
.running::after {
  content: "";
  position: absolute;
  left: 11px;
  top: 27px;
  width: 3px;
  height: 3px;
  border-radius: 50%;
  background: #a9b3bc;
}
.badge {
  position: absolute;
  right: -3px;
  top: -3px;
  width: 11px;
  height: 11px;
  border-radius: 50%;
  background: #e8513f;
  color: #fff;
  font: 7px/11px Inter, sans-serif;
  text-align: center;
}
.calendar { border-radius: 5px; background: #f5f5f5; color: #222; font-size: 14px; line-height: 16px; text-align: center; overflow: hidden; }
.calendar b { display: block; background: #e65749; color: #fff; font-size: 5px; font-weight: 500; line-height: 8px; }
.tv { display: flex; align-items: center; justify-content: center; gap: 1px; border-radius: 5px; background: #161d1b; color: #fff; font-size: 9px; font-weight: 500; }
.app.tv svg { width: 7px; height: 7px; fill: #fff; }
.office b {
  position: absolute;
  left: 0;
  top: -1px;
  width: 15px;
  height: 26px;
  clip-path: polygon(0 12%, 100% 0, 100% 100%, 0 88%);
  color: #fff;
  font-size: 12px;
  line-height: 26px;
  text-align: center;
}
.word b { background: #3a64ad; }
.excel b { background: #2f7b4e; }
.powerpoint b { background: #d1492c; }
.yuzu { width: 29px; height: 29px; margin-top: -3px; background: #eec64e; color: #fff8dc; font-size: 11px; line-height: 27px; text-align: center; font-weight: 300; }
```
